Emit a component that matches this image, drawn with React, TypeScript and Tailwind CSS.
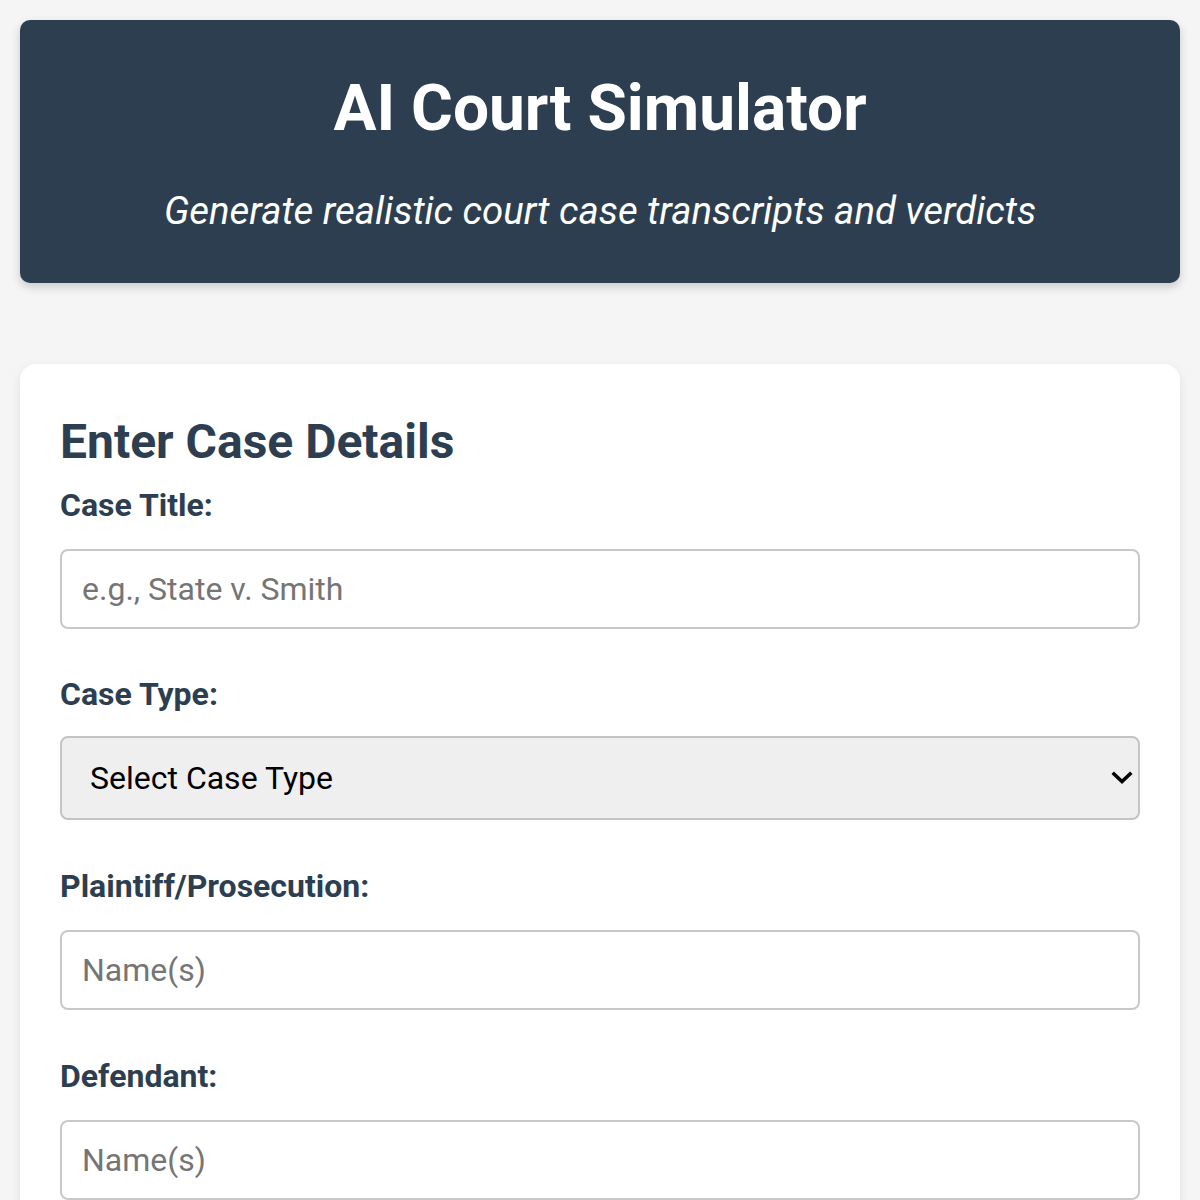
import { ChangeEvent, useState } from 'react'

const labelCls = 'block text-[32px] leading-[38px] font-bold text-[#2c3e50] mb-[25px]'
const inputCls =
  'block w-full h-[80px] px-[20px] border-2 border-[#c8c8c8] rounded-[8px] bg-white text-[32px] text-[#222] placeholder:text-[#757575] outline-none focus:border-[#2c3e50]'

function Field({ id, label, placeholder, gap }: { id: string; label: string; placeholder: string; gap: string }) {
  return (
    <div className={gap}>
      <label htmlFor={id} className={labelCls}>
        {label}
      </label>
      <input id={id} type="text" placeholder={placeholder} className={inputCls} />
    </div>
  )
}

export default function App() {
  const [caseType, setCaseType] = useState('')

  return (
    <div className="min-h-screen bg-[#f5f5f5] p-[20px] font-['Roboto',sans-serif]">
      {/* Header */}
      <header className="bg-[#2c3e50] rounded-[10px] shadow-[0_4px_10px_rgba(0,0,0,0.18)] pt-[51px] pb-[50px] px-[20px] text-center text-white">
        <h1 className="text-[64px] leading-[75px] font-bold mb-[42px]">AI Court Simulator</h1>
        <p className="text-[38.4px] leading-[45px] italic">Generate realistic court case transcripts and verdicts</p>
      </header>

      {/* Case form */}
      <section className="mt-[81px] bg-white rounded-[16px] shadow-[0_4px_12px_rgba(0,0,0,0.08)] p-[40px]">
        <h2 className="mt-[10px] mb-[16px] text-[48px] leading-[56px] font-bold text-[#2c3e50]">Enter Case Details</h2>

        <Field id="title" label="Case Title:" placeholder="e.g., State v. Smith" gap="mb-[46px]" />

        <div className="mb-[47px]">
          <label htmlFor="type" className="block text-[32px] leading-[38px] font-bold text-[#2c3e50] mb-[23px]">
            Case Type:
          </label>
          <div className="relative">
            <select
              id="type"
              value={caseType}
              onChange={(e: ChangeEvent<HTMLSelectElement>) => setCaseType(e.target.value)}
              className="block w-full h-[84px] appearance-none pl-[28px] pr-[60px] border-2 border-[#c4c4c4] rounded-[8px] bg-[#efefef] text-[32px] text-black outline-none"
            >
              <option value="">Select Case Type</option>
              <option value="criminal">Criminal</option>
              <option value="civil">Civil</option>
              <option value="family">Family</option>
              <option value="corporate">Corporate</option>
            </select>
            <svg
              className="absolute right-[7px] top-[35px] w-[22px] h-[13px] pointer-events-none"
              viewBox="0 0 22 13"
              fill="none"
              stroke="black"
              strokeWidth="3.6"
              strokeLinecap="square"
            >
              <path d="M3 3l8 7.5L19 3" />
            </svg>
          </div>
        </div>

        <Field id="plaintiff" label="Plaintiff/Prosecution:" placeholder="Name(s)" gap="mb-[47px]" />
        <Field id="defendant" label="Defendant:" placeholder="Name(s)" gap="mb-[47px]" />

        <div className="mb-[46px]">
          <label htmlFor="summary" className={labelCls}>
            Case Summary:
          </label>
          <textarea
            id="summary"
            rows={4}
            placeholder="Briefly describe the facts of the case"
            className="block w-full p-[20px] border-2 border-[#c8c8c8] rounded-[8px] text-[32px] placeholder:text-[#757575] outline-none"
          />
        </div>

        <button className="w-full py-[24px] bg-[#2c3e50] text-white text-[32px] font-bold rounded-[8px]">
          Generate Trial
        </button>
      </section>
    </div>
  )
}
